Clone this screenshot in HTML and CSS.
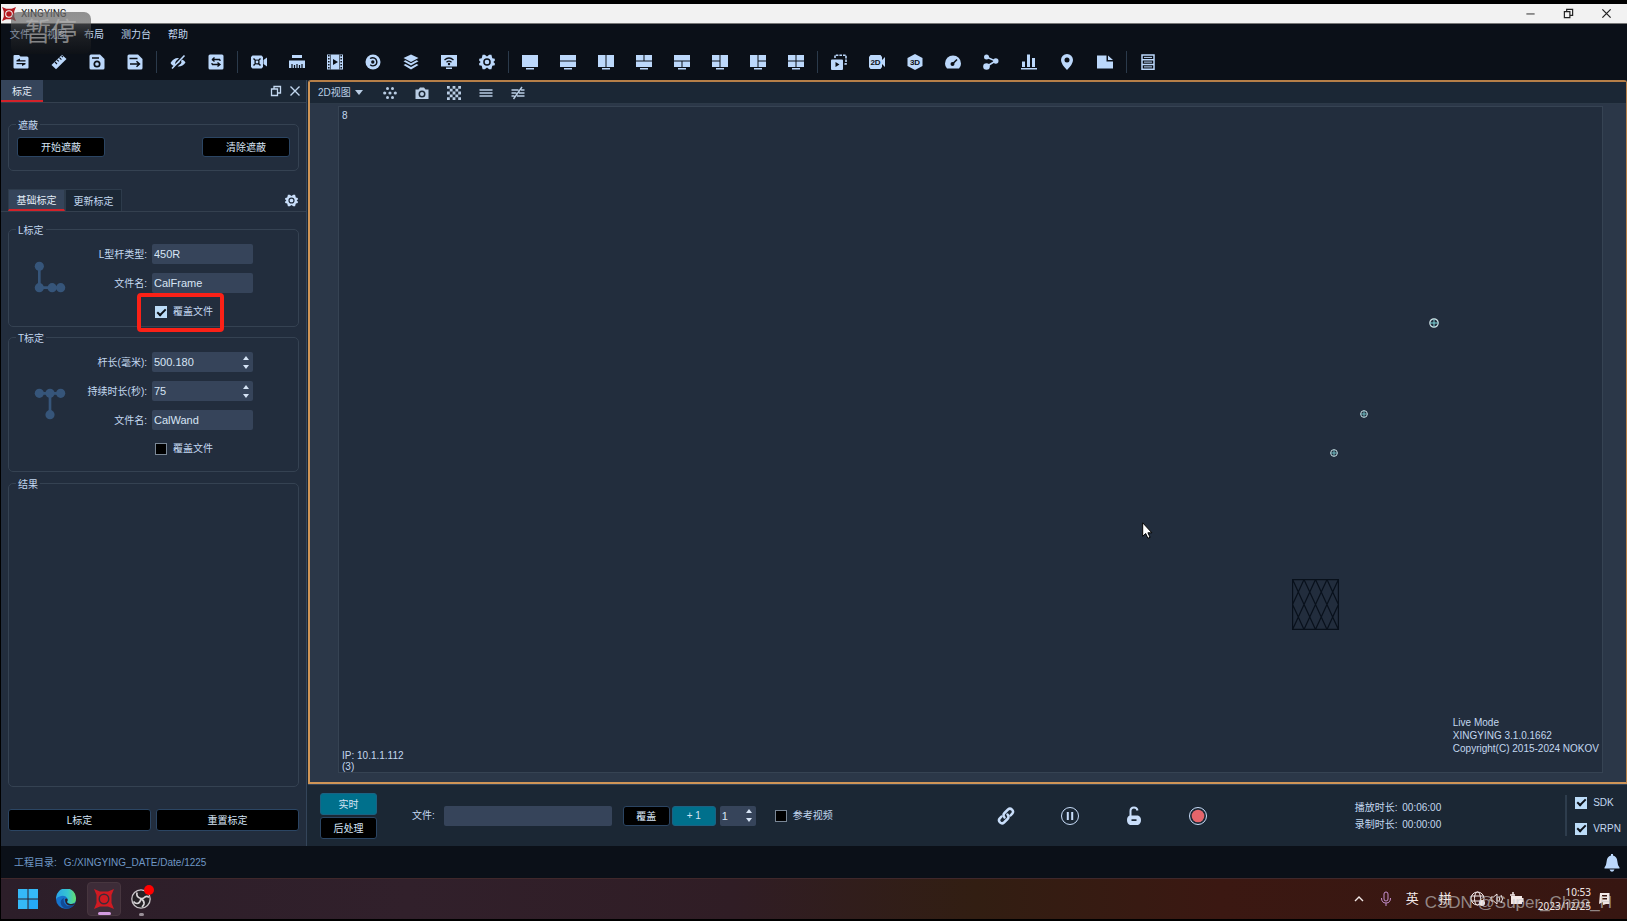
FILE: index.html
```html
<!DOCTYPE html>
<html lang="zh-CN">
<head>
<meta charset="utf-8">
<title>XINGYING</title>
<link rel="stylesheet" href="styles.css">
</head>
<body>
<svg class="defs" aria-hidden="true">
  <symbol id="gear" viewBox="0 0 16 16"><path fill-rule="evenodd" d="M3.600.8h2.200L8 2.400 10.200.8h2.200l.9 3.400 2.500.6v2L14.300 8l1.500 1.200v2l-2.500.6-.9 3.400h-2.200L8 13.600l-2.200 1.600H3.600l-.9-3.400-2.500-.6v-2L1.700 8 .2 6.800v-2l2.500-.6zM8 4.200a3.800 3.800 0 1 0 0 7.600 3.800 3.800 0 0 0 0-7.600zM8 5.700a2.300 2.300 0 1 1 0 4.600 2.300 2.300 0 0 1 0-4.600z"/></symbol>
  <symbol id="star" viewBox="0 0 20 20"><path fill-rule="evenodd" d="M0 0l6 2.500h8L20 0l-2.500 6v8L20 20l-6-2.500H6L0 20l2.500-6V6zM10 4.500a5.500 5.500 0 1 0 0 11 5.500 5.500 0 0 0 0-11zM10 6a4 4 0 1 1 0 8 4 4 0 0 1 0-8z"/><circle cx="10" cy="10" r="2.200"/></symbol>
  <symbol id="restore" viewBox="0 0 12 12"><path fill="none" stroke="currentColor" stroke-width="1.300" d="M1.500 4h6v6.500h-6zM4 4V1.500h6.500V8H7.500"/></symbol>
  <symbol id="close" viewBox="0 0 12 12"><path fill="none" stroke="currentColor" stroke-width="1.400" d="M1.500 1.500l9 9M10.500 1.500l-9 9"/></symbol>
  <symbol id="up" viewBox="0 0 6 4"><path d="M3 0l3 4H0z"/></symbol>
  <symbol id="down" viewBox="0 0 6 4"><path d="M3 4L0 0h6z"/></symbol>
  <symbol id="marker" viewBox="0 0 10 10"><circle cx="5" cy="5" r="4.200" fill="none" stroke="#d3e6ea" stroke-width="1.200"/><path d="M5 1v8M1 5h8" stroke="#7fd6da"/></symbol>
</svg>

<header class="titlebar">
  <svg class="logo"><use href="#star"/></svg>
  <span class="app-name">XINGYING</span>
  <button class="win-btn" aria-label="最小化"><svg viewBox="0 0 12 12"><path d="M1.500 6.500h9" stroke="currentColor"/></svg></button>
  <button class="win-btn" aria-label="还原"><svg><use href="#restore"/></svg></button>
  <button class="win-btn" aria-label="关闭"><svg><use href="#close"/></svg></button>
  <div class="pause-badge">暂停</div>
</header>

<nav class="menubar">
  <button>文件</button><button>视图</button><button>布局</button><button>测力台</button><button>帮助</button>
</nav>

<div class="toolbar">
  <button aria-label="打开"><svg viewBox="0 0 16 16"><path fill-rule="evenodd" d="M.5 2q0-1 1-1H6l1.500 1.500H14q1.500 0 1.500 1.500v9.500q0 1-1 1h-13q-1 0-1-1zM3.500 6.300v1.200h9V6.300H7V4.500zM3.500 9v1.200H9V12l3.500-1.800V9z"/></svg></button>
  <button aria-label="标尺"><svg viewBox="0 0 16 16"><path d="M.5 11L11 .8 15.500 5 5 15.300z"/><path d="M4 8l2 2M6.200 5.800l1.600 1.600M8.400 3.700l2 2M10.500 1.700l1.500 1.500" stroke="#0b1018" stroke-width="1.100"/></svg></button>
  <button aria-label="保存"><svg viewBox="0 0 16 16"><path d="M.5 2Q.5.500 2 .500h9L15.500 5v9q0 1.500-1.500 1.500H2Q.5 15.500.5 14z"/><path d="M3 4h7" stroke="#0b1018" stroke-width="1.500"/><circle cx="8" cy="10" r="2.700" fill="none" stroke="#0b1018" stroke-width="1.700"/></svg></button>
  <button aria-label="导出"><svg viewBox="0 0 16 16"><path d="M.5 2Q.5.500 2 .500h9L15.500 5v9q0 1.500-1.500 1.500H2Q.5 15.500.5 14z"/><path d="M2.500 4.500h8M3 10h9M9.500 7.200l3 2.800-3 2.800" fill="none" stroke="#0b1018" stroke-width="1.500"/></svg></button>
  <i class="sep"></i>
  <button aria-label="隐藏"><svg viewBox="0 0 16 16"><path d="M.5 9Q4 3.500 9 4.200L6 7q-1.500 2-.5 3.500L3.500 12Q1.500 11 .5 9zM12 5.500q2.500 1 3.500 3-3 4.500-8 4l3.500-3q1-1.500 0-2.500z"/><path d="M2 14.500L14.500 1.500M7 9.500l2.500-2" stroke="currentColor" stroke-width="1.600"/></svg></button>
  <button aria-label="切换"><svg viewBox="0 0 16 16"><rect x=".5" y=".5" width="15" height="15" rx="1.500"/><path d="M12 5.500H5M6.500 3.500L4 5.700M6.500 7.500L4 5.500M4 10.500h7M9.500 8.500l2.500 2-2.500 2M12 5.500v1.500M4 9v1.500" fill="none" stroke="#0b1018" stroke-width="1.300"/></svg></button>
  <i class="sep"></i>
  <button aria-label="摄像"><svg viewBox="0 0 16 16"><path d="M0 3l1.500-1.500h9L12 3v10l-1.500 1.500h-9L0 13zM12.500 6L16 3.500v9L12.500 10z"/><path d="M2.500 4.500l7 7M9.500 4.500l-7 7" stroke="#0b1018" stroke-width="1.400"/><circle cx="6" cy="8" r="2" fill="#bcd8fb" stroke="#0b1018" stroke-width="1.200"/></svg></button>
  <button aria-label="测量"><svg viewBox="0 0 16 16"><path d="M3 1h10v3H3zM0 6.500h16V14H0z"/><path d="M3 14v-4M5.500 14v-3M8 14v-4M10.500 14v-3M13 14v-4" stroke="#0b1018" stroke-width="1.200"/></svg></button>
  <button aria-label="影片"><svg viewBox="0 0 16 16"><path d="M0 .5h16v15H0z"/><path d="M1.800 1v14M14.200 1v14" stroke="#0b1018" stroke-width="1.500" stroke-dasharray="1.600 1.400"/><path d="M6 5l5 3-5 3z" fill="#0b1018"/><path d="M3.500.5v15M12.500.5v15" stroke="#0b1018" stroke-width=".6"/></svg></button>
  <button aria-label="回放"><svg viewBox="0 0 16 16"><circle cx="8" cy="8" r="7.500"/><path d="M5 4.500q3.500-2 6 .8 2 3.700-.8 5.900-2.700 1.500-5-.5" fill="none" stroke="#0b1018" stroke-width="1.400"/><circle cx="7.800" cy="8" r="1.700" fill="#0b1018"/></svg></button>
  <button aria-label="图层"><svg viewBox="0 0 16 16"><path d="M8 .5L15.500 4 8 8 .5 4zM.5 7.300L2.500 6.300 8 9.300l5.500-3 2 1L8 11.500zM.5 11l2-1L8 13l5.500-3 2 1L8 15.500z"/></svg></button>
  <button aria-label="网络"><svg viewBox="0 0 16 16"><path d="M0 1h16v11.500H0zM5 13.500h6V15H5z"/><path d="M3.500 6q4.500-4 9 0M5.500 8.200q2.500-2.200 5 0" fill="none" stroke="#0b1018" stroke-width="1.300"/><circle cx="8" cy="10" r="1.200" fill="#0b1018"/></svg></button>
  <button aria-label="设置"><svg><use href="#gear"/></svg></button>
  <i class="sep"></i>
  <button aria-label="单视图"><svg viewBox="0 0 16 16"><path d="M0 1h16v12H0zM4 14h8v1.500H4z"/></svg></button>
  <button aria-label="上下视图"><svg viewBox="0 0 16 16"><path d="M0 1h16v5.500H0zM0 7.500h16V13H0zM4 14h8v1.500H4z"/></svg></button>
  <button aria-label="左右视图"><svg viewBox="0 0 16 16"><path d="M0 1h7.500v12H0zM8.500 1H16v12H8.500zM4 14h8v1.500H4z"/></svg></button>
  <button aria-label="上二下一"><svg viewBox="0 0 16 16"><path d="M0 1h7.500v5.500H0zM8.500 1H16v5.500H8.500zM0 7.500h16V13H0zM4 14h8v1.500H4z"/></svg></button>
  <button aria-label="上一下二"><svg viewBox="0 0 16 16"><path d="M0 1h16v5.500H0zM0 7.500h7.500V13H0zM8.500 7.500H16V13H8.500zM4 14h8v1.500H4z"/></svg></button>
  <button aria-label="左二右一"><svg viewBox="0 0 16 16"><path d="M0 1h7.500v5.500H0zM0 7.500h7.500V13H0zM8.500 1H16v12H8.500zM4 14h8v1.500H4z"/></svg></button>
  <button aria-label="左一右二"><svg viewBox="0 0 16 16"><path d="M0 1h7.500v12H0zM8.500 1H16v5.500H8.500zM8.500 7.500H16V13H8.500zM4 14h8v1.500H4z"/></svg></button>
  <button aria-label="四视图"><svg viewBox="0 0 16 16"><path d="M0 1h7.500v5.500H0zM8.500 1H16v5.500H8.500zM0 7.500h7.500V13H0zM8.500 7.500H16V13H8.500zM4 14h8v1.500H4z"/></svg></button>
  <i class="sep"></i>
  <button aria-label="播放序列"><svg viewBox="0 0 16 16"><path fill-rule="evenodd" d="M0 6.500Q0 5.500 1 5.500h10q1 0 1 1V15q0 1-1 1H1q-1 0-1-1zM4.500 8v5l4-2.500z"/><path d="M4 4V1.200h11V10h-2" fill="none" stroke="currentColor" stroke-width="1.600" stroke-dasharray="2.600 1"/></svg></button>
  <button aria-label="2D"><svg viewBox="0 0 16 16"><path d="M0 3l1.500-2h10L13 3v10l-1.500 2h-10L0 13zM13 6l3-3v10l-3-3z"/><text x="6.500" y="11" class="glyph">2D</text></svg></button>
  <button aria-label="3D"><svg viewBox="0 0 16 16"><path d="M8 0l7.500 4v8L8 16 .5 12V4z"/><text x="8" y="11" class="glyph">3D</text></svg></button>
  <button aria-label="仪表"><svg viewBox="0 0 16 16"><path d="M2 14.500Q0 12.500 0 9.500a8 8 0 0 1 16 0q0 3-2 5z"/><circle cx="7.500" cy="10" r="2" fill="#0b1018"/><path d="M7.500 10l4.500-4.500" stroke="#0b1018" stroke-width="1.600"/></svg></button>
  <button aria-label="骨骼"><svg viewBox="0 0 16 16"><path d="M3.500 3l9 4-9 5.500" fill="none" stroke="currentColor" stroke-width="1.500"/><circle cx="3.500" cy="3" r="2.500"/><circle cx="12.800" cy="7" r="2.700"/><circle cx="3.500" cy="12.500" r="3.300"/></svg></button>
  <button aria-label="图表"><svg viewBox="0 0 16 16"><path d="M1 7.500h3V13H1zM6 .5h3V13H6zM11 4h3v9h-3zM0 14h16v1.500H0z"/></svg></button>
  <button aria-label="定位"><svg viewBox="0 0 16 16"><path fill-rule="evenodd" d="M8 0a6 6 0 0 1 6 6q0 4-6 10Q2 10 2 6a6 6 0 0 1 6-6zm0 3.500a2.500 2.500 0 1 0 0 5 2.500 2.500 0 0 0 0-5z"/></svg></button>
  <button aria-label="备注"><svg viewBox="0 0 16 16"><path d="M0 1.500h9.500v6H16v7H0zM11 1.500L16 6h-5z"/></svg></button>
  <i class="sep"></i>
  <button aria-label="列表"><svg viewBox="0 0 16 16"><path fill="none" stroke="currentColor" stroke-width="1.500" d="M2 1h12v14.200H2zM2 5.700h12M2 10.500h12"/><path d="M4 3.400h8M4 8.100h8M4 12.900h8" stroke="currentColor"/></svg></button>
</div>

<main class="workspace">
  <aside class="sidebar">
    <div class="dock-head">
      <span class="dock-tab">标定</span>
      <button class="bare" aria-label="浮动"><svg><use href="#restore"/></svg></button>
      <button class="bare" aria-label="关闭面板"><svg><use href="#close"/></svg></button>
    </div>
    <fieldset class="group mask">
      <legend>遮蔽</legend>
      <button class="btn">开始遮蔽</button>
      <button class="btn">清除遮蔽</button>
    </fieldset>
    <div class="tabs" role="tablist">
      <button role="tab" aria-selected="true" class="tab active">基础标定</button>
      <button role="tab" aria-selected="false" class="tab">更新标定</button>
      <button class="bare tab-gear" aria-label="标定设置"><svg><use href="#gear"/></svg></button>
    </div>
    <fieldset class="group form-l">
      <legend>L标定</legend>
      <div class="form">
        <svg class="wand" viewBox="0 0 30 30"><path d="M5 5v20h20" fill="none" stroke="currentColor" stroke-width="2.500"/><circle cx="5" cy="5" r="4.300"/><circle cx="5" cy="25" r="4.300"/><circle cx="17" cy="25" r="4.300"/><circle cx="25" cy="25" r="4.300"/></svg>
        <label for="ltype">L型杆类型:</label>
        <select id="ltype" class="field"><option>450R</option></select>
        <label for="lfile">文件名:</label>
        <input id="lfile" class="field" type="text" value="CalFrame">
        <label class="check marked"><input type="checkbox" checked>覆盖文件</label>
      </div>
    </fieldset>
    <fieldset class="group form-t">
      <legend>T标定</legend>
      <div class="form">
        <svg class="wand" viewBox="0 0 30 30"><path d="M5 5h20M15 5v20" fill="none" stroke="currentColor" stroke-width="2.500"/><circle cx="5" cy="5" r="4.300"/><circle cx="15" cy="5" r="4.300"/><circle cx="25" cy="5" r="4.300"/><circle cx="15" cy="25" r="4.300"/></svg>
        <label for="len">杆长(毫米):</label>
        <div class="spin"><input id="len" type="number" step="0.001" value="500.180"><span><button aria-label="增加"><svg><use href="#up"/></svg></button><button aria-label="减少"><svg><use href="#down"/></svg></button></span></div>
        <label for="dur">持续时长(秒):</label>
        <div class="spin"><input id="dur" type="number" value="75"><span><button aria-label="增加"><svg><use href="#up"/></svg></button><button aria-label="减少"><svg><use href="#down"/></svg></button></span></div>
        <label for="tfile">文件名:</label>
        <input id="tfile" class="field" type="text" value="CalWand">
        <label class="check"><input type="checkbox">覆盖文件</label>
      </div>
    </fieldset>
    <fieldset class="group result"><legend>结果</legend></fieldset>
    <div class="actions">
      <button class="btn">L标定</button>
      <button class="btn">重置标定</button>
    </div>
  </aside>

  <div class="content">
    <section class="viewport">
      <div class="view-head">
        <button class="view-select">2D视图<svg viewBox="0 0 8 5"><path d="M0 0h8L4 5z"/></svg></button>
        <button aria-label="标记点"><svg viewBox="0 0 14 14"><circle cx="4.500" cy="2.500" r="1.500"/><circle cx="9.500" cy="2.500" r="1.500"/><circle cx="1.700" cy="7" r="1.600"/><circle cx="7" cy="7" r="1.600"/><circle cx="12.300" cy="7" r="1.600"/><circle cx="4.500" cy="11.500" r="1.500"/><circle cx="9.500" cy="11.500" r="1.500"/></svg></button>
        <button aria-label="拍照"><svg viewBox="0 0 14 14"><path fill-rule="evenodd" d="M.5 3.500h3L5 1.500h4l1.500 2h3v9.500H.5zM7 4.500a3.500 3.500 0 1 0 0 7 3.500 3.500 0 0 0 0-7zM7 6a2 2 0 1 1 0 4 2 2 0 0 1 0-4z"/></svg></button>
        <button aria-label="棋盘"><svg viewBox="0 0 14 14"><path d="M0 1.400h14M0 7h14M0 12.600h14" stroke="currentColor" stroke-width="2.800" stroke-dasharray="2.800 2.800"/><path d="M2.800 4.200H14M2.800 9.800H14" stroke="currentColor" stroke-width="2.800" stroke-dasharray="2.800 2.800"/></svg></button>
        <button aria-label="线条"><svg viewBox="0 0 14 14"><path d="M.5 4h13M.5 7h13M.5 10h13" stroke="currentColor" stroke-width="1.500"/></svg></button>
        <button aria-label="隐藏线条"><svg viewBox="0 0 14 14"><path d="M.5 4h7M10 4h3.500M.5 7h5M8 7h5.500M.5 10h3M6 10h7.500M2.500 13L11 1" stroke="currentColor" stroke-width="1.400"/></svg></button>
      </div>
      <div class="view-body">
        <div class="canvas">
          <div class="cam-id">8</div>
          <svg class="pin pin-a"><use href="#marker"/></svg>
          <svg class="pin pin-b"><use href="#marker"/></svg>
          <svg class="pin pin-c"><use href="#marker"/></svg>
          <svg class="mesh" viewBox="0 0 47 51"><path fill="none" stroke="#08101b" stroke-width="1.200" d="M.6.6h45.800v49.800H.600zM.6.6L23.500 50.400M12 .6l23 49.800M23.500.6l22.900 49.800M35 .6l11.400 25M.6 25.500L12 50.400M46.400.6L23.500 50.400M35 .6L12 50.400M23.500.6L.6 50.400M12 .6L.6 25.500M46.400 25.500L35 50.400"/></svg>
          <svg class="cursor" viewBox="0 0 11 17"><path d="M.7.800v13.500l3-2.800 2.200 4.800 2.200-1-2.200-4.500h4z" fill="#fff" stroke="#000"/></svg>
          <div class="canvas-foot">
            <div class="cam-ip">IP: 10.1.1.112<br>(3)</div>
            <div class="build">Live Mode<br>XINGYING 3.1.0.1662<br>Copyright(C) 2015-2024 NOKOV</div>
          </div>
        </div>
      </div>
    </section>

    <section class="transport">
      <div class="modes"><button class="btn on">实时</button><button class="btn">后处理</button></div>
      <label for="file">文件:</label>
      <input id="file" class="field file" type="text">
      <button class="btn over">覆盖</button>
      <button class="btn on plus">+ 1</button>
      <div class="spin small"><input type="number" value="1" aria-label="序号"><span><button aria-label="增加"><svg><use href="#up"/></svg></button><button aria-label="减少"><svg><use href="#down"/></svg></button></span></div>
      <label class="check ref"><input type="checkbox">参考视频</label>
      <div class="play">
        <button aria-label="连接"><svg viewBox="0 0 20 20"><g fill="none" stroke="currentColor" stroke-width="2.500" stroke-linecap="round"><path d="M8.500 11.500q-2-2.500 0-4.500L12 3.500q2-1.800 4 .200 2 2 .200 4L14.500 9.500"/><path d="M11.500 8.500q2 2.500 0 4.500L8 16.500q-2 1.800-4-.200-2-2-.200-4l1.700-1.800"/></g></svg></button>
        <button aria-label="暂停"><svg viewBox="0 0 20 20"><circle cx="10" cy="10" r="8.500" fill="none" stroke="currentColor"/><path d="M7.800 6v8M12.200 6v8" stroke="currentColor" stroke-width="2"/></svg></button>
        <button aria-label="解锁"><svg viewBox="0 0 20 20"><path d="M6.500 10V5q0-3.500 3.500-3.500 3 0 3.500 3" fill="none" stroke="currentColor" stroke-width="2"/><path fill-rule="evenodd" d="M6 9.500h8q3 1 3 4.500t-3 5H6q-3-1-3-5t3-4.500zM7.500 13.300v1.600h5v-1.600z"/></svg></button>
        <button aria-label="录制"><svg viewBox="0 0 20 20"><circle cx="10" cy="10" r="8.500" fill="none" stroke="currentColor"/><circle cx="10" cy="10" r="6.300" fill="#e4656b"/></svg></button>
      </div>
      <div class="times"><div>播放时长: <span>00:06:00</span></div><div>录制时长: <span>00:00:00</span></div></div>
      <div class="streams">
        <label class="check"><input type="checkbox" checked>SDK</label>
        <label class="check"><input type="checkbox" checked>VRPN</label>
      </div>
    </section>
  </div>
</main>

<footer class="status">
  <span>工程目录:</span><span>G:/XINGYING_DATE/Date/1225</span>
  <button class="bare" aria-label="通知"><svg class="bell" viewBox="0 0 16 18"><path d="M7 0h2v1.500q4 1 4.300 5.500.2 4 2.200 6.500v1H.5v-1Q2.500 11 2.700 7 3 2.500 7 1.500zM5.500 15.500h5q-1 2.300-2.500 2.300t-2.500-2.300z"/></svg></button>
</footer>

<div class="taskbar">
  <button class="task" aria-label="开始"><svg viewBox="0 0 20 20"><path fill="#35b9f7" d="M0 0h9.500v9.500H0zM10.500 0H20v9.500h-9.500zM0 10.500h9.500V20H0z"/><path fill="#25a8f5" d="M10.500 10.500H20V20h-9.500z"/></svg></button>
  <button class="task" aria-label="Edge"><svg viewBox="0 0 20 20"><defs><linearGradient id="eg" x1="0" x2="1"><stop offset="0" stop-color="#2aa4e8"/><stop offset=".6" stop-color="#36c6d0"/><stop offset="1" stop-color="#66e06a"/></linearGradient></defs><circle cx="10" cy="10" r="10" fill="#1673cc"/><path fill="url(#eg)" d="M0 9A10 10 0 0 1 20 9.500q0 5-5 5.500-4 0-4-2 1.500-2 .2-4Q9 6 5 7 1 8 0 10z"/><path fill="#124a95" d="M8 9q-1.500 5 2.500 7.500 3.500 1.500 8-1.500Q15 21 8.500 19.500 3.500 16 5 11.500 6 9.500 8 9z"/><path fill="#2c1e29" d="M9 10.500q1-1.500 2.500-.5.500 1.500-.5 3 1 2 5 2 2.500-.5 3-1-1 2.500-4 2.500-6 0-6-6z"/></svg></button>
  <button class="task current" aria-label="XINGYING"><svg class="red"><use href="#star"/></svg></button>
  <button class="task running" aria-label="OBS"><svg viewBox="0 0 20 20"><circle cx="10" cy="10" r="9.200" fill="#252125" stroke="#c9c4c8" stroke-width="1.300"/><path fill="none" stroke="#d8d4d7" stroke-width="1.700" d="M6 3.500q-1 5 4 6 2 .5 4-1.500 2-1.500 4 .5M10 9.500q-1 5-4 5-2 0-3.500-2M10.500 10q3 2 2.500 5-.5 1.500-2 3"/></svg></button>
  <div class="tray">
    <svg class="t-caret" viewBox="0 0 12 12"><path d="M2 8l4-4 4 4" fill="none" stroke="currentColor" stroke-width="1.400"/></svg>
    <svg class="t-mic" viewBox="0 0 12 16"><rect x="4" y="1" width="4" height="9" rx="2" fill="none" stroke="currentColor"/><path d="M1.500 7q0 5 4.500 5t4.500-5M6 12v3" fill="none" stroke="currentColor"/></svg>
    <span class="ime">英</span>
    <span class="ime pin-yin">拼</span>
    <svg class="t-net" viewBox="0 0 16 16"><g fill="none" stroke="currentColor"><circle cx="7.500" cy="7.500" r="6.500"/><ellipse cx="7.500" cy="7.500" rx="3" ry="6.500"/><path d="M1.500 5h12M1.500 10h12"/></g><circle cx="12" cy="12" r="3" fill="currentColor"/></svg>
    <svg class="t-vol" viewBox="0 0 14 14"><path d="M1 5h2.500L7 2v10L3.500 9H1zM9 5q1.500 2 0 4M11 3q3 4 0 8" fill="none" stroke="currentColor"/></svg>
    <svg class="t-bat" viewBox="0 0 14 14"><path d="M1 4h11v2h1.500v4H12v2H1z" fill="currentColor"/><path d="M3 0v3M0 3h5" stroke="currentColor" stroke-width="1.500"/></svg>
    <div class="clock">10:53<br>2023/12/25</div>
    <svg class="t-note" viewBox="0 0 12 12"><path fill-rule="evenodd" d="M2 0h9.500v11H8l-3 1V9L1 11zM4 2v1.500h5V2zM4 5v1.500h5V5z" fill="currentColor"/></svg>
  </div>
  <div class="watermark">CSDN @Super_Chao_H</div>
</div>
</body>
</html>
```
FILE: styles.css
```css
*, *::before, *::after { box-sizing: border-box; }

body {
  margin: 0;
  min-height: 100vh;
  display: flex;
  flex-direction: column;
  background: #000;
  color: #c3d8f0;
  font: 10px/12px "Liberation Sans", "Noto Sans CJK SC", sans-serif;
  padding-left: 1px;
  padding-bottom: 2px;
}

button, input, select { font: inherit; color: inherit; margin: 0; padding: 0; border: 0; background: none; }
svg { display: block; fill: currentColor; }
.defs { position: absolute; width: 0; height: 0; }

/* title bar */
.titlebar {
  position: relative;
  display: flex;
  align-items: center;
  height: 24px;
  border-top: 4px solid #000;
  border-bottom: 1px solid #777;
  background: #f2f2f2;
  color: #222;
  padding-left: 1px;
  padding-right: 2px;
}
.logo { width: 14px; height: 14px; color: #b3191f; }
.app-name { margin-left: 5px; margin-right: auto; font-family: Roboto, sans-serif; }
.win-btn { width: 38px; display: flex; justify-content: center; }
.win-btn svg { width: 11px; height: 11px; }
.pause-badge {
  position: absolute;
  left: 10px;
  top: 8px;
  z-index: 2;
  width: 80px;
  height: 42px;
  border-radius: 7px;
  background: linear-gradient(rgba(110, 110, 110, .75), rgba(50, 50, 50, .45) 55%, rgba(20, 20, 20, .3));
  color: rgba(180, 180, 180, .7);
  font-size: 26px;
  line-height: 40px;
  text-align: center;
}

/* menus and tools */
.menubar { display: flex; gap: 17px; height: 20px; padding: 2px 0 0 9px; background: #0b1018; }
.toolbar { display: flex; align-items: center; height: 36px; padding-left: 1px; background: #0b1018; color: #bcd8fb; }
.toolbar button { width: 38px; display: flex; justify-content: center; }
.toolbar svg { width: 16px; height: 16px; }
.toolbar .sep { width: 1px; height: 22px; margin: 0 2px; background: #2b3a4b; }
.glyph { font: bold 8px "Liberation Sans", sans-serif; text-anchor: middle; fill: #0b1018; }

/* left dock */
.workspace { flex: 1; display: flex; background: #1b2734; }
.sidebar {
  width: 306px;
  flex: none;
  display: flex;
  flex-direction: column;
  padding-bottom: 15px;
  background: #222d3d;
  border-right: 1px solid #34455a;
}
.dock-head {
  display: flex;
  align-items: center;
  gap: 7px;
  height: 23px;
  padding-right: 5px;
  background: #1b2735;
  border-bottom: 1px solid #34404f;
}
.dock-tab {
  width: 42px;
  height: 22px;
  margin-right: auto;
  line-height: 24px;
  text-align: center;
  background: #35445a;
  border-bottom: 2px solid #d3222a;
  color: #e4edf8;
}
.bare svg { width: 12px; height: 12px; }
.group {
  min-width: 0;
  margin: 0 7px;
  border: 1px solid #354252;
  border-radius: 5px;
  padding: 8px 8px 9px;
}
.group legend { height: 14px; line-height: 18px; padding: 0 2px; margin-left: -1px; }
.btn { height: 20px; padding-top: 2px; border: 1px solid #2b4563; border-radius: 3px; background: #000; color: #d6e4f5; }
.btn.on { background: #00708c; border-color: #1b6283; }
.mask { display: flex; justify-content: space-between; margin-top: 14px; padding-top: 6px; padding-bottom: 13px; }
.mask .btn { width: 88px; }
.tabs { display: flex; height: 23px; margin-top: 18px; padding-left: 7px; padding-right: 8px; border-bottom: 1px solid #34404f; }
.tab { width: 57px; padding-top: 2px; background: #1b2735; border: 1px solid #2d3b4b; border-bottom: 0; }
.tab.active { background: #35445a; border-bottom: 2px solid #d3222a; color: #e4edf8; }
.tab-gear { margin-left: auto; color: #c9defa; }
.tab-gear svg { width: 13px; height: 13px; }
.form-l { margin-top: 10px; padding-bottom: 4px; }
.form-t { margin-top: 3px; padding-bottom: 12px; }
.result { flex: 1; margin-top: 4px; }
.actions { display: grid; grid-template-columns: 1fr 1fr; gap: 5px; margin: 22px 7px 0; }
.actions .btn { height: 22px; }

.form {
  display: grid;
  grid-template-columns: 57px 68px 101px;
  grid-auto-rows: 20px;
  column-gap: 5px;
  row-gap: 9px;
  align-items: center;
}
.form > label { padding-top: 2px; text-align: right; white-space: nowrap; }
.wand { grid-row: 1 / span 3; width: 32px; height: 32px; margin-left: 17px; color: #36557a; }
.form-l .wand { grid-row: 1 / span 2; margin-top: 16px; }
.form-t .wand { grid-row: 1 / span 4; margin-bottom: 4px; }
.field { width: 100%; height: 20px; padding: 0 2px; border-radius: 2px; background: #36445a; color: #d6e4f5; font-size: 11px; appearance: none; }
.form .check { grid-column: 3; height: 18px; align-self: start; }
.check { display: flex; align-items: center; gap: 6px; white-space: nowrap; }
.check input {
  appearance: none;
  width: 12px;
  height: 12px;
  margin-left: 3px;
  border: 1px solid #7a8796;
  background: #000;
}
.check input:checked { border-color: #bcdcf8; background: #bcdcf8; display: grid; place-content: center; }
.check input:checked::before {
  content: "";
  width: 9px;
  height: 5px;
  margin-bottom: 2px;
  border-left: 2px solid #0b1018;
  border-bottom: 2px solid #0b1018;
  transform: rotate(-45deg);
}
.marked { position: relative; }
.marked::after {
  content: "";
  position: absolute;
  left: -15px;
  top: -9px;
  width: 87px;
  height: 39px;
  border: 4px solid #fb2117;
  border-radius: 4px;
}
.spin { display: flex; height: 20px; padding: 0 4px 0 2px; border-radius: 2px; background: #36445a; color: #d6e4f5; font-size: 11px; }
.spin input { flex: 1; min-width: 0; appearance: textfield; }
.spin input::-webkit-inner-spin-button { display: none; }
.spin span { display: flex; flex-direction: column; justify-content: center; gap: 5px; }
.spin svg { width: 6px; height: 4px; }
.spin button { display: block; }

/* viewport */
.content { flex: 1; min-width: 0; display: flex; flex-direction: column; margin-left: 1px; }
.viewport { flex: 1; display: flex; flex-direction: column; border: 2px solid #b67f48; border-right-width: 1px; border-left-color: #cf9557; border-bottom-color: #cf9557; border-radius: 3px 3px 0 0; }
.view-head { display: flex; align-items: center; gap: 17px; height: 22px; padding-left: 8px; background: #1b2735; border-bottom: 1px solid #2c3948; color: #b9cde4; }
.view-head svg { width: 14px; height: 14px; }
.view-head button + button { margin-right: 1px; }
.view-head .view-select { display: flex; align-items: center; gap: 4px; margin-right: 3px; }
.view-head .view-select svg { width: 8px; height: 5px; }
.view-body { flex: 1; display: flex; padding: 2px 23px 9px 28px; background: #2b3748; }
.canvas { position: relative; flex: 1; display: flex; flex-direction: column; justify-content: space-between; padding: 3px 3px 0; border: 1px solid #364353; background: #222d3d; }
.canvas-foot { display: flex; justify-content: space-between; align-items: flex-end; }
.cam-ip { line-height: 11px; }
.build { line-height: 13px; margin-bottom: 17px; }
.pin { position: absolute; width: 8px; height: 8px; }
.pin-a { left: 1090px; top: 211px; width: 10px; height: 10px; }
.pin-b { left: 1021px; top: 303px; }
.pin-c { left: 991px; top: 342px; }
.mesh { position: absolute; left: 953px; top: 472px; width: 47px; height: 51px; }
.cursor { position: absolute; left: 803px; top: 415px; width: 11px; height: 17px; }

/* transport */
.transport { display: flex; align-items: center; height: 62px; padding-left: 12px; border-top: 1px solid #34455a; background: #1b2734; white-space: nowrap; }
.modes { display: flex; flex-direction: column; gap: 2px; width: 57px; margin-right: 35px; }
.modes .btn { height: 22px; }
.file { width: 168px; margin: 0 11px 0 9px; }
.over { width: 47px; }
.plus { width: 44px; margin: 0 4px 0 2px; padding-top: 0; }
.spin.small { width: 36px; }
.ref { margin-left: 16px; }
.play { display: flex; gap: 44px; margin-left: auto; color: #c9defa; }
.play svg { width: 20px; height: 20px; }
.times { margin-left: 147px; line-height: 17px; }
.times span { margin-left: 2px; }
.streams { display: flex; flex-direction: column; justify-content: center; gap: 14px; height: 41px; margin-left: 124px; padding-left: 5px; padding-right: 6px; border-left: 2px solid #2e3d4d; }

/* status and task bar */
.status { display: flex; align-items: center; gap: 7px; height: 32px; padding: 2px 7px 0 13px; background: #0b1018; color: #6f97c4; }
.status .bare { margin-left: auto; color: #bcd8fb; }
.status .bell { width: 16px; height: 18px; }
.taskbar {
  position: relative;
  display: flex;
  align-items: center;
  height: 41px;
  padding: 0 17px 0 10px;
  border-top: 1px solid #40282b;
  background: linear-gradient(90deg, #2c1e29, #31202b 25%, #301d25 45%, #321e12 60%, #3b1812 75%, #371611);
  color: #f3e9e8;
}
.task { position: relative; display: grid; place-items: center; width: 34px; height: 34px; margin-right: 4px; border-radius: 4px; }
.task svg { width: 20px; height: 20px; }
.current { background: #3d2c38; border: 1px solid #47363f; margin-right: 3px; }
.red { color: #d01a22; }
.current::after, .running::after { content: ""; position: absolute; bottom: 0; width: 13px; height: 3px; border-radius: 2px; background: #d39be0; }
.running::after { width: 5px; background: #9a9098; }
.running::before { content: ""; position: absolute; right: 4px; top: 3px; width: 10px; height: 10px; border-radius: 50%; background: #f00; z-index: 1; }
.tray { margin-left: auto; display: flex; align-items: center; }
.t-caret { width: 12px; height: 12px; }
.t-mic { width: 12px; height: 16px; margin: 0 14px 0 15px; color: #c690cf; }
.ime { font-size: 13px; line-height: 16px; }
.pin-yin { margin: 0 18px 0 20px; }
.t-net { width: 16px; height: 16px; }
.t-vol { width: 14px; height: 14px; margin: 0 6px 0 4px; }
.t-bat { width: 14px; height: 14px; }
.clock { margin: 0 7px 0 14px; font: 10px/14px "Noto Sans", sans-serif; text-align: right; }
.t-note { width: 12px; height: 12px; }
.watermark { position: absolute; right: 15px; top: 13px; font-size: 17px; line-height: 22px; color: rgba(200, 200, 200, .65); }
```
